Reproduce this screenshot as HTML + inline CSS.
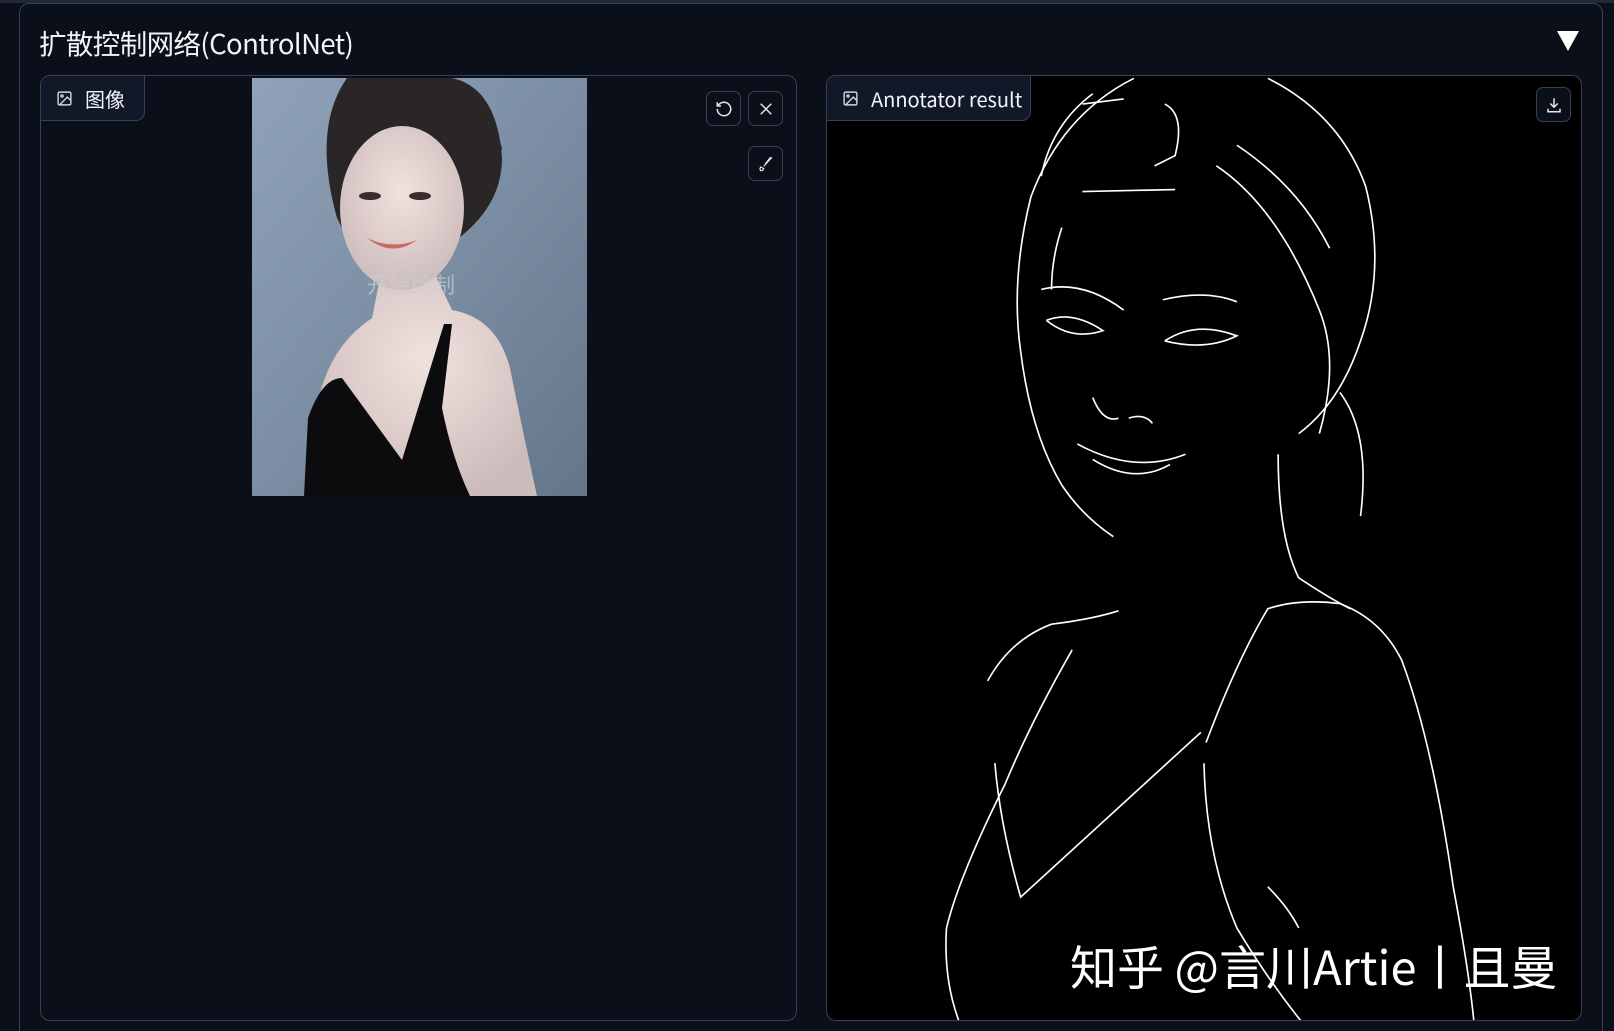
<!DOCTYPE html>
<html><head><meta charset="utf-8"><style>
*{margin:0;padding:0;box-sizing:border-box}
html,body{width:1614px;height:1031px;overflow:hidden}
body{background:#0b0f19;font-family:"Liberation Sans","Noto Sans CJK SC",sans-serif}
.clip{position:relative;width:1614px;height:1031px;overflow:hidden}
.outer{position:absolute;left:19px;top:3px;width:1584px;height:1060px;border:1px solid #374151;border-radius:10px;background:#0b0f19}
.topline{position:absolute;left:0;top:0;width:1614px;height:3px;background:#1f2937}
.title{position:absolute;left:39px;top:22px;font-size:27.5px;color:#f3f4f6;font-family:"Noto Sans CJK SC","Liberation Sans",sans-serif;letter-spacing:-0.6px}
.tri{position:absolute;left:1557px;top:31px;width:0;height:0;border-left:11px solid transparent;border-right:11px solid transparent;border-top:20px solid #fff}
.blk{position:absolute;top:75px;height:946px;border:1px solid #374151;border-radius:10px;overflow:hidden}
.tab{position:absolute;left:0;top:0;height:45px;border-right:1px solid #374151;border-bottom:1px solid #374151;border-bottom-right-radius:9px;background:#111827;color:#f3f4f6;font-size:20px;display:flex;align-items:center;padding-left:15px;gap:12px;font-family:"Noto Sans CJK SC","Liberation Sans",sans-serif}
.btn{position:absolute;width:35px;height:35px;border:1px solid #374151;border-radius:7px;background:#0b0f19;display:flex;align-items:center;justify-content:center}
.wm{position:absolute;left:1070px;top:930px;font-size:47px;color:#fff;font-family:"Noto Sans CJK SC","Liberation Sans",sans-serif;white-space:nowrap}
</style></head><body><div class="clip">
<div class="topline"></div>
<div class="outer"></div>
<div class="title">扩散控制网络(ControlNet)</div>
<div class="tri"></div>

<div class="blk" style="left:40px;width:757px;background:#0b0f19">
  <svg style="position:absolute;left:211px;top:2px" width="335" height="418" viewBox="0 0 335 418">
    <defs><linearGradient id="bg" x1="0" y1="0" x2="1" y2="1"><stop offset="0" stop-color="#8fa2b8"/><stop offset="0.5" stop-color="#7b8ea3"/><stop offset="1" stop-color="#64768a"/></linearGradient>
    <radialGradient id="sk" cx="0.5" cy="0.4" r="0.6"><stop offset="0" stop-color="#f2e2de"/><stop offset="1" stop-color="#cdbcbc"/></radialGradient></defs>
    <rect width="335" height="418" fill="url(#bg)"/>
    <path d="M60 418 L65 330 Q75 270 120 240 L130 190 L180 190 L200 232 Q245 240 258 290 Q270 350 285 418 Z" fill="url(#sk)"/>
    <path d="M95 0 Q60 50 85 140 L95 160 L200 165 Q250 130 250 80 Q245 10 200 0 Z" fill="#2a2628"/>
    <ellipse cx="150" cy="130" rx="62" ry="82" fill="url(#sk)"/>
    <path d="M90 90 Q120 20 190 40 Q230 60 240 120 L250 70 Q230 0 160 0 Q100 5 88 70 Z" fill="#2a2628"/>
    <path d="M52 418 L56 340 Q70 300 90 300 L150 382 L192 246 L200 246 L190 330 Q200 380 218 418 Z" fill="#0c0c0e"/>
    <ellipse cx="118" cy="118" rx="11" ry="4" fill="#3a2c2a"/><ellipse cx="168" cy="118" rx="11" ry="4" fill="#3a2c2a"/>
    <path d="M115 160 Q140 180 165 162 Q140 172 115 160Z" fill="#c76b63"/>
    <text x="115" y="215" font-size="22" fill="#c8ced6" opacity="0.7" font-family="Noto Sans CJK SC,sans-serif">开始绘制</text>
  </svg>
  <div class="tab" style="width:104px"><svg width="17" height="17" viewBox="0 0 24 24" fill="none" stroke="#d1d5db" stroke-width="2"><rect x="3" y="3" width="18" height="18" rx="2"/><circle cx="8.5" cy="8.5" r="1.5"/><path d="M21 15l-5-5L5 21"/></svg>图像</div>
  <div class="btn" style="left:665px;top:15px"><svg width="18" height="18" viewBox="0 0 24 24" fill="none" stroke="#e5e7eb" stroke-width="2"><path d="M3 12a9 9 0 1 0 3-6.7L3 8"/><path d="M3 3v5h5"/></svg></div>
  <div class="btn" style="left:707px;top:15px"><svg width="18" height="18" viewBox="0 0 24 24" fill="none" stroke="#e5e7eb" stroke-width="2"><path d="M5 5l14 14M19 5L5 19"/></svg></div>
  <div class="btn" style="left:707px;top:70px"><svg width="18" height="18" viewBox="0 0 24 24" fill="none" stroke="#e5e7eb" stroke-width="1.6"><path d="M20 3L9 15M18 3l-7 9M5 16q-2 3 0 5 3 0 4-3z"/></svg></div>
</div>

<div class="blk" style="left:826px;width:756px;background:#000">
  <svg style="position:absolute;left:0;top:0" width="756" height="946" viewBox="802 73 734 918" fill="none" stroke="#fff" stroke-width="1.6">
    <path d="M1100 75 Q1030 110 1000 190 Q980 270 990 340 Q1000 420 1030 470 Q1050 500 1080 520"/>
    <path d="M1060 90 Q1020 120 1010 170"/><path d="M1050 100 L1090 95"/>
    <path d="M1230 75 Q1300 110 1325 180 Q1345 260 1320 330 Q1300 390 1260 420"/>
    <path d="M1180 160 Q1240 200 1280 300 Q1300 350 1280 420"/><path d="M1200 140 Q1260 180 1290 240"/>
    <path d="M1130 100 Q1150 110 1140 150 L1120 160"/>
    <path d="M1050 185 L1140 183"/>
    <path d="M1030 220 Q1020 250 1020 280"/>
    <path d="M1010 280 Q1050 270 1090 300"/><path d="M1015 310 Q1040 300 1070 320 Q1040 330 1015 310"/>
    <path d="M1128 290 Q1170 280 1200 292"/><path d="M1130 330 Q1160 310 1200 325 Q1170 340 1130 330"/>
    <path d="M1060 385 Q1070 410 1085 405 M1095 405 Q1110 400 1118 410"/>
    <path d="M1045 430 Q1100 460 1150 440"/><path d="M1060 445 Q1100 470 1135 450"/>
    <path d="M1240 440 Q1240 520 1260 560 Q1290 580 1310 590"/>
    <path d="M1300 380 Q1330 420 1320 500"/>
    <path d="M958 660 Q980 620 1020 605 Q1060 600 1085 592"/>
    <path d="M1040 630 Q1000 700 975 760 Q930 850 918 900 Q915 950 930 990"/>
    <path d="M1170 720 Q1200 640 1230 590 Q1260 580 1300 585 Q1340 600 1360 640 Q1390 720 1410 860 Q1425 940 1430 990"/>
    <path d="M1165 710 L990 870 Q970 800 965 740"/>
    <path d="M1168 740 Q1170 830 1200 900 Q1230 950 1262 990"/>
    <path d="M1230 860 Q1250 880 1260 900"/>
  </svg>
  <div class="tab" style="width:204px"><svg width="17" height="17" viewBox="0 0 24 24" fill="none" stroke="#d1d5db" stroke-width="2"><rect x="3" y="3" width="18" height="18" rx="2"/><circle cx="8.5" cy="8.5" r="1.5"/><path d="M21 15l-5-5L5 21"/></svg>Annotator result</div>
  <div class="btn" style="left:709px;top:11px"><svg width="18" height="18" viewBox="0 0 24 24" fill="none" stroke="#e5e7eb" stroke-width="2"><path d="M12 3v12M7 10l5 5 5-5M4 17v4h16v-4"/></svg></div>
</div>
<div class="wm">知乎 @言川Artie丨且曼</div>
</div></body></html>
